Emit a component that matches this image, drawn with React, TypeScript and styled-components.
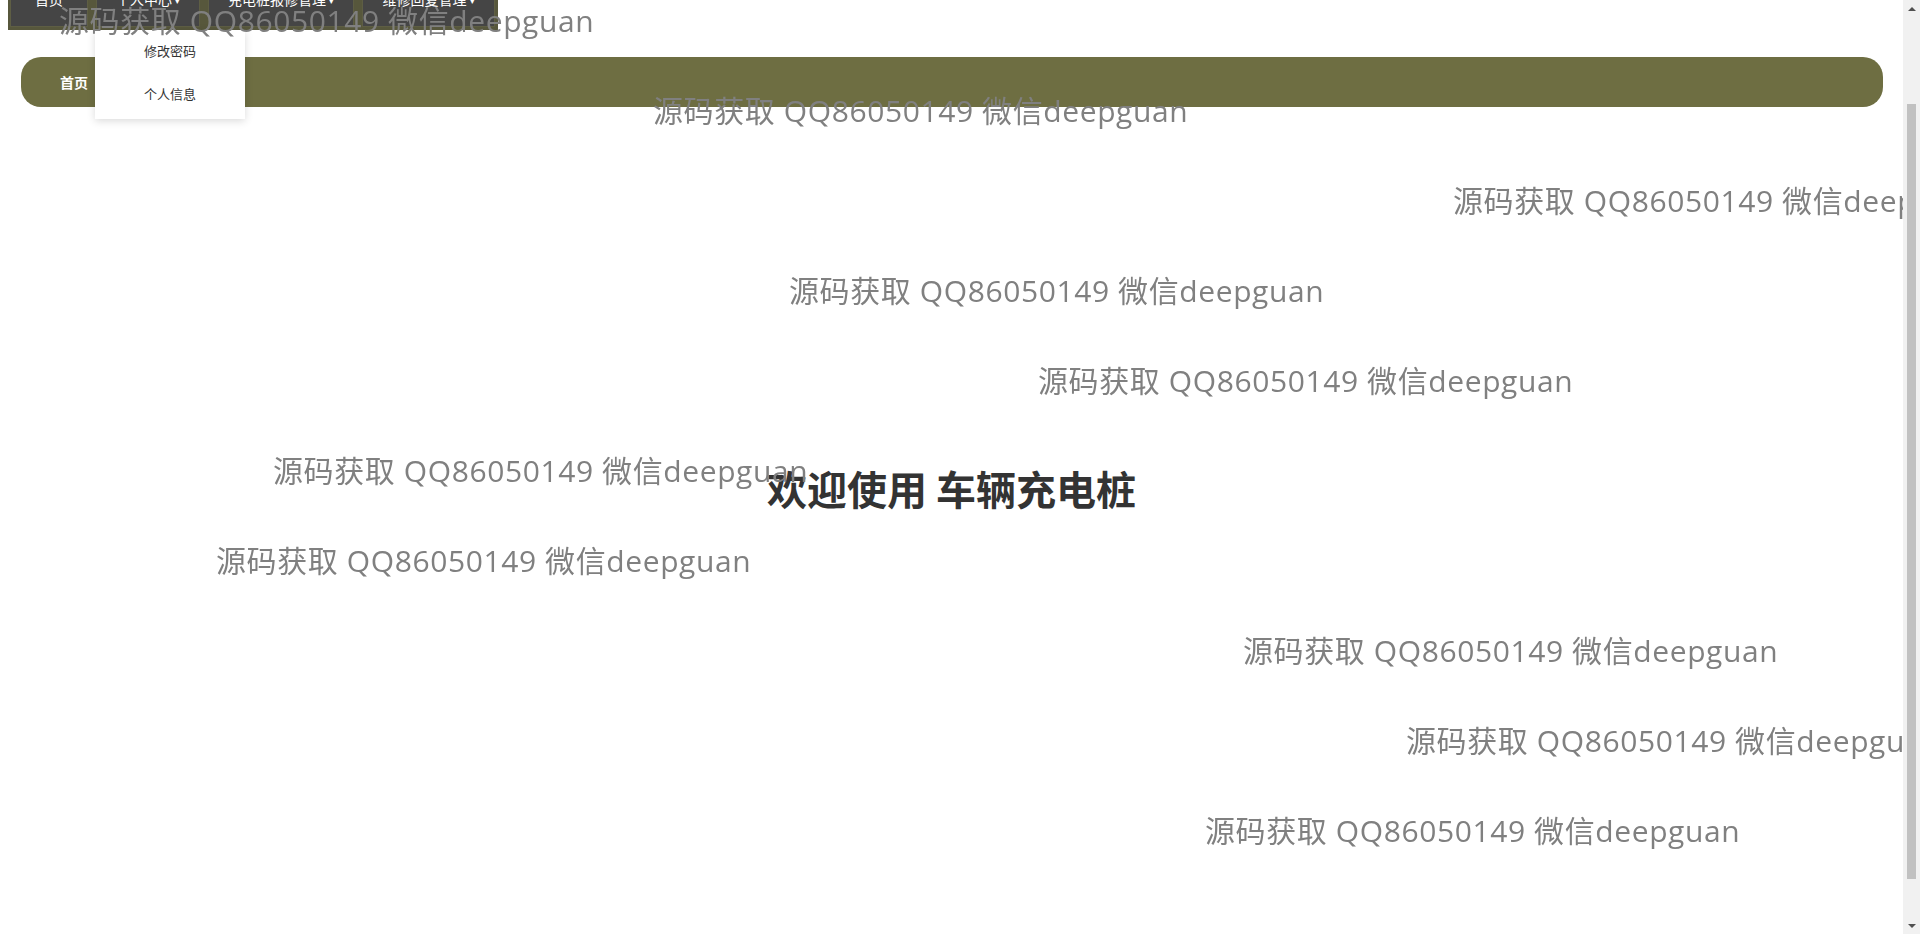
import React, { useEffect } from 'react';
import styled, { createGlobalStyle } from 'styled-components';

const GlobalStyle = createGlobalStyle`
    html {
        overflow-y: scroll;
    }
    body {
        margin: 0 17px 0 0;
        background: #fff;
        font-family: "Noto Sans CJK SC", "Noto Sans", sans-serif;
        color: #333;
    }
`;

const Page = styled.div`
    min-height: 1085px;
    display: flex;
    flex-direction: column;
`;

const TopSpace = styled.div`
    height: 76px;
    flex-shrink: 0;
`;

const Nav = styled.nav`
    display: flex;
    align-self: flex-start;
    gap: 8px;
    margin-left: 8px;
    padding: 0 3px 3px 2px;
    background: #57573c;
`;

const NavItem = styled.div`
    position: relative;
`;

const NavButton = styled.div<{ $w: number }>`
    width: ${(p) => p.$w}px;
    height: 56px;
    line-height: 56px;
    background: #454545;
    color: #fff;
    font-size: 14px;
    text-align: center;
    box-shadow: inset 0 0 0 1px #5e5e44;
`;

const Caret = styled.span`
    font-size: 9px;
    margin-left: 3px;
    vertical-align: 1px;
`;

const Dropdown = styled.div`
    position: absolute;
    top: calc(100% + 3px);
    left: -1px;
    width: 150px;
    padding-bottom: 3px;
    background: #fff;
    box-shadow: 0 2px 8px rgba(0, 0, 0, 0.15);
    z-index: 5;
`;

const DropItem = styled.div`
    height: 43px;
    line-height: 41px;
    text-align: center;
    font-size: 13px;
    color: #333;
`;

const Crumb = styled.div`
    height: 50px;
    margin: 27px 20px 0 21px;
    border-radius: 20px;
    background: #6e6e42;
    display: flex;
    align-items: center;
    padding-left: 39px;
    color: #fff;
    font-size: 14px;
    font-weight: bold;
`;

const Welcome = styled.h1`
    margin: 357px 0 0;
    text-align: center;
    font-size: 40px;
    line-height: 48px;
    font-weight: bold;
    color: #333;
`;

const Marks = styled.div`
    position: fixed;
    top: 0;
    left: 0;
    right: 17px;
    bottom: 0;
    pointer-events: none;
    z-index: 10;
    overflow: hidden;
`;

const Mark = styled.div<{ $x: number; $y: number }>`
    position: absolute;
    left: ${(p) => p.$x}px;
    top: ${(p) => p.$y - 18}px;
    height: 36px;
    line-height: 36px;
    white-space: nowrap;
    font-family: "Open Sans", "Noto Sans CJK SC", sans-serif;
    font-size: 30px;
    letter-spacing: 0.6px;
    color: #808080;
`;

const ScrollTrack = styled.div`
    position: fixed;
    top: 0;
    right: 0;
    bottom: 0;
    width: 17px;
    background: #f1f1f1;
    display: flex;
    flex-direction: column;
    align-items: center;
    z-index: 20;
`;

const Arrow = styled.div<{ $down?: boolean }>`
    height: 17px;
    width: 17px;
    display: flex;
    align-items: center;
    justify-content: center;
    flex-shrink: 0;
    &::after {
        content: '';
        border-left: 4px solid transparent;
        border-right: 4px solid transparent;
        ${(p) => (p.$down ? 'border-top: 4px solid #505050;' : 'border-bottom: 4px solid #505050;')}
    }
`;

const ThumbArea = styled.div`
    flex: 1;
    width: 100%;
    display: flex;
    flex-direction: column;
    align-items: center;
    padding-top: 87px;
    padding-bottom: 38px;
`;

const Thumb = styled.div`
    flex: 1;
    width: 9px;
    background: #c1c1c1;
`;

const marks = [
    [59, 21],
    [653, 111],
    [1453, 201],
    [789, 291],
    [1038, 381],
    [273, 471],
    [216, 561],
    [1243, 651],
    [1406, 741],
    [1205, 831],
];

const navItems = [
    { label: '首页', w: 78, caret: false },
    { label: '个人中心', w: 104, caret: true, menu: ['修改密码', '个人信息'] },
    { label: '充电桩报修管理', w: 146, caret: true },
    { label: '维修回复管理', w: 133, caret: true },
];

export default function App() {
    useEffect(() => {
        window.scrollTo(0, 105);
    }, []);

    return (
        <>
            <GlobalStyle />
            <Page>
                <TopSpace />
                <Nav>
                    {navItems.map((item) => (
                        <NavItem key={item.label}>
                            <NavButton $w={item.w}>
                                {item.label}
                                {item.caret && <Caret>▾</Caret>}
                            </NavButton>
                            {item.menu && (
                                <Dropdown>
                                    {item.menu.map((m) => (
                                        <DropItem key={m}>{m}</DropItem>
                                    ))}
                                </Dropdown>
                            )}
                        </NavItem>
                    ))}
                </Nav>
                <Crumb>首页</Crumb>
                <Welcome>欢迎使用 车辆充电桩</Welcome>
            </Page>
            <Marks>
                {marks.map(([x, y], i) => (
                    <Mark key={i} $x={x} $y={y}>
                        源码获取 QQ86050149 微信deepguan
                    </Mark>
                ))}
            </Marks>
            <ScrollTrack>
                <Arrow />
                <ThumbArea>
                    <Thumb />
                </ThumbArea>
                <Arrow $down />
            </ScrollTrack>
        </>
    );
}
